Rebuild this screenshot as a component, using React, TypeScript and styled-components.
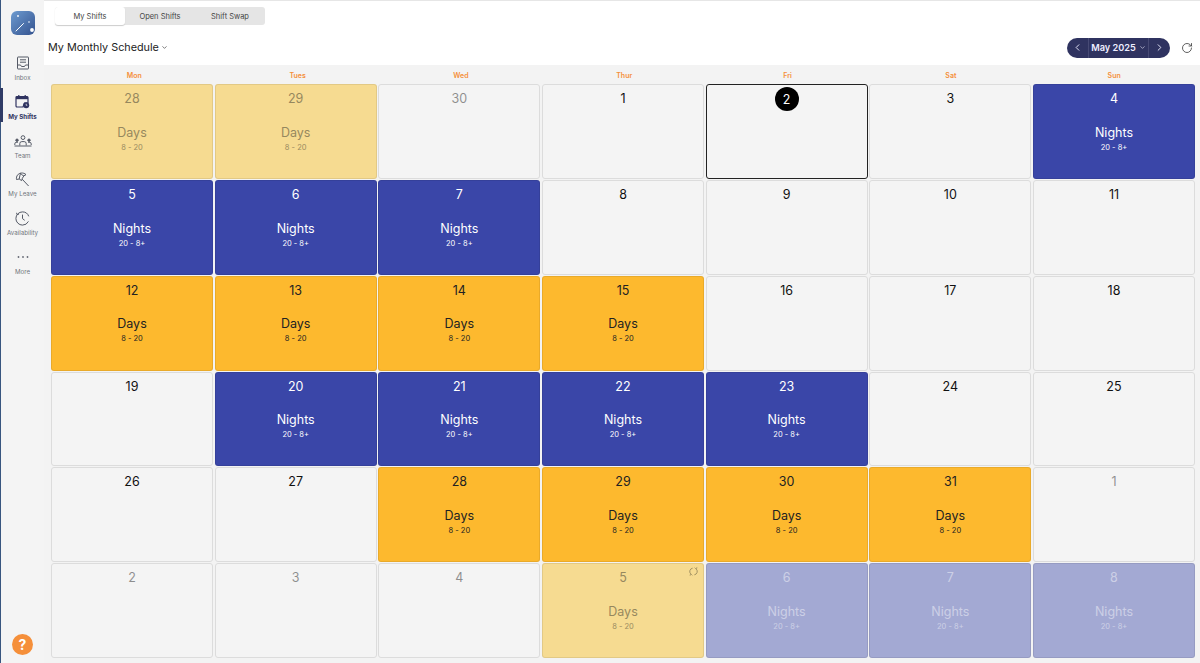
import styled, { createGlobalStyle } from "styled-components";
import { ChevronDown, ChevronLeft, ChevronRight, RotateCw } from "lucide-react";
import { ReactNode } from "react";

type Kind = "empty" | "days" | "nights";

interface Day {
    date: number;
    kind?: Kind;
    faded?: boolean;
    today?: boolean;
    swap?: boolean;
}

const weekdays = ["Mon", "Tues", "Wed", "Thur", "Fri", "Sat", "Sun"];

const days: Day[] = [
    { date: 28, kind: "days", faded: true },
    { date: 29, kind: "days", faded: true },
    { date: 30, faded: true },
    { date: 1 },
    { date: 2, today: true },
    { date: 3 },
    { date: 4, kind: "nights" },
    { date: 5, kind: "nights" },
    { date: 6, kind: "nights" },
    { date: 7, kind: "nights" },
    { date: 8 },
    { date: 9 },
    { date: 10 },
    { date: 11 },
    { date: 12, kind: "days" },
    { date: 13, kind: "days" },
    { date: 14, kind: "days" },
    { date: 15, kind: "days" },
    { date: 16 },
    { date: 17 },
    { date: 18 },
    { date: 19 },
    { date: 20, kind: "nights" },
    { date: 21, kind: "nights" },
    { date: 22, kind: "nights" },
    { date: 23, kind: "nights" },
    { date: 24 },
    { date: 25 },
    { date: 26 },
    { date: 27 },
    { date: 28, kind: "days" },
    { date: 29, kind: "days" },
    { date: 30, kind: "days" },
    { date: 31, kind: "days" },
    { date: 1, faded: true },
    { date: 2, faded: true },
    { date: 3, faded: true },
    { date: 4, faded: true },
    { date: 5, kind: "days", faded: true, swap: true },
    { date: 6, kind: "nights", faded: true },
    { date: 7, kind: "nights", faded: true },
    { date: 8, kind: "nights", faded: true },
];

const shiftInfo = {
    days: { name: "Days", hours: "8 - 20" },
    nights: { name: "Nights", hours: "20 - 8+" },
};

const InboxIcon = () => (
    <svg width="14" height="14" viewBox="0 0 14 14" fill="none" stroke="#555a66" strokeWidth="1">
        <rect x="1.5" y="1" width="11" height="12" rx="0.5" />
        <path d="M1.5 9h3l1 1.5h3l1-1.5h3M4 3.8h6M4 6.2h6" />
    </svg>
);

const CalendarIcon = () => (
    <svg width="15" height="15" viewBox="0 0 15 15">
        <path d="M1 3.5a1 1 0 0 1 1-1h10a1 1 0 0 1 1 1V9H9.5L8 13H2a1 1 0 0 1-1-1z" fill="none" stroke="#2f3360" strokeWidth="1.2" />
        <path d="M1 2.6h12v2.6H1z" fill="#2f3360" />
        <path d="M3.8 1v2.4M10.2 1v2.4" stroke="#2f3360" strokeWidth="1.2" />
        <circle cx="11.2" cy="11.2" r="3" fill="#2f3360" />
        <path d="M11.2 9.8v1.5h1.1" stroke="#fff" strokeWidth="0.7" fill="none" />
    </svg>
);

const TeamIcon = () => (
    <svg width="18" height="12" viewBox="0 0 18 12" fill="none" stroke="#555a66" strokeWidth="1">
        <circle cx="9" cy="2.6" r="1.9" />
        <path d="M5.8 10.5V8.6a2 2 0 0 1 2-2h2.4a2 2 0 0 1 2 2v1.9" />
        <circle cx="3" cy="5.2" r="1.2" fill="#555a66" />
        <circle cx="15" cy="5.2" r="1.2" fill="#555a66" />
        <path d="M0.8 10V8.8a1.4 1.4 0 0 1 1.4-1.4h1.6M17.2 10V8.8a1.4 1.4 0 0 0-1.4-1.4h-1.6M0.5 11h17" />
    </svg>
);

const LeaveIcon = () => (
    <svg width="15" height="15" viewBox="0 0 15 15" fill="none" stroke="#555a66" strokeWidth="1">
        <path d="M1.5 7.5C.9 4.2 3.2 1.2 6.4 1c1.7-.1 3.3.4 4.6 1.6L8.9 3.9 7.4 6.2 6.6 8.6 4.2 7 1.5 7.5z" />
        <path d="M5.6 1.2C5 3 4.5 5 4.2 7M8.9 3.9C7.4 3.4 6.2 2.4 5.6 1.2M7.2 7.2 13.6 14" />
    </svg>
);

const AvailabilityIcon = () => (
    <svg width="15" height="15" viewBox="0 0 15 15" fill="none" stroke="#555a66" strokeWidth="1">
        <circle cx="7.5" cy="7.5" r="6.6" strokeDasharray="36 5" strokeDashoffset="-3" />
        <path d="M1.6 1.8l.4 1.8 1.8-.3" />
        <path d="M7.5 3.6v4l2.2 1.7" />
    </svg>
);

const MoreIcon = () => (
    <svg width="14" height="14" viewBox="0 0 14 14" fill="#666a75">
        <circle cx="2.5" cy="7" r="0.9" />
        <circle cx="7" cy="7" r="0.9" />
        <circle cx="11.5" cy="7" r="0.9" />
    </svg>
);

const LogoIcon = () => (
    <svg width="24" height="24" viewBox="0 0 24 24">
        <defs>
            <linearGradient id="logoFill" x1="0" y1="0" x2="1" y2="1">
                <stop offset="0" stopColor="#6d9bd0" />
                <stop offset="1" stopColor="#34538f" />
            </linearGradient>
        </defs>
        <rect width="24" height="24" rx="6" fill="url(#logoFill)" />
        <path d="M5 20 12.5 12.5" stroke="#fff" strokeWidth="1" strokeLinecap="round" />
        <circle cx="7" cy="5" r="0.9" fill="#fff" />
        <circle cx="18" cy="11" r="0.8" fill="#fff" />
        <circle cx="21" cy="19" r="1.9" fill="#fff" />
    </svg>
);

const SwapIcon = () => (
    <svg width="9" height="9" viewBox="0 0 9 9" fill="none" stroke="#3f3a2a" strokeWidth="1">
        <path d="M3.6 1.2A3.4 3.4 0 0 0 1.6 6.8M5.4 7.8A3.4 3.4 0 0 0 7.4 2.2" />
        <path d="M5.6.6 7.4 2.4l.5-2.2M3.4 8.4 1.6 6.6l-.5 2.2" strokeWidth="0.8" />
    </svg>
);

const navItems: { label: string; icon: ReactNode; active?: boolean }[] = [
    { label: "Inbox", icon: <InboxIcon /> },
    { label: "My Shifts", icon: <CalendarIcon />, active: true },
    { label: "Team", icon: <TeamIcon /> },
    { label: "My Leave", icon: <LeaveIcon /> },
    { label: "Availability", icon: <AvailabilityIcon /> },
    { label: "More", icon: <MoreIcon /> },
];

export default function App() {
    return (
        <>
            <GlobalStyle />
            <Page>
                <Sidebar>
                    <Logo><LogoIcon /></Logo>
                    <Nav>
                        {navItems.map((item) => (
                            <NavItem key={item.label} $active={item.active}>
                                <NavIcon>{item.icon}</NavIcon>
                                <NavLabel $active={item.active}>{item.label}</NavLabel>
                            </NavItem>
                        ))}
                    </Nav>
                    <HelpButton>?</HelpButton>
                </Sidebar>
                <Main>
                    <Header>
                        <Tabs>
                            <Tab $active>My Shifts</Tab>
                            <Tab>Open Shifts</Tab>
                            <Tab>Shift Swap</Tab>
                        </Tabs>
                        <TitleRow>
                            <Title>
                                My Monthly Schedule
                                <ChevronDown size={7} strokeWidth={2} />
                            </Title>
                            <Controls>
                                <MonthPicker>
                                    <MonthArrow><ChevronLeft size={11} strokeWidth={2} /></MonthArrow>
                                    <MonthLabel>
                                        May 2025
                                        <ChevronDown size={7} strokeWidth={2} />
                                    </MonthLabel>
                                    <MonthArrow><ChevronRight size={11} strokeWidth={2} /></MonthArrow>
                                </MonthPicker>
                                <RotateCw size={12} strokeWidth={1.7} color="#444" />
                            </Controls>
                        </TitleRow>
                    </Header>
                    <Calendar>
                        <Weekdays>
                            {weekdays.map((day) => <Weekday key={day}>{day}</Weekday>)}
                        </Weekdays>
                        <DayGrid>
                            {days.map((day, i) => (
                                <DayCell key={i} $kind={day.kind ?? "empty"} $faded={day.faded} $today={day.today}>
                                    <DateNumber $today={day.today}>{day.date}</DateNumber>
                                    {day.kind && day.kind !== "empty" && (
                                        <>
                                            <ShiftName>{shiftInfo[day.kind].name}</ShiftName>
                                            <ShiftHours>{shiftInfo[day.kind].hours}</ShiftHours>
                                        </>
                                    )}
                                    {day.swap && <SwapMark><SwapIcon /></SwapMark>}
                                </DayCell>
                            ))}
                        </DayGrid>
                    </Calendar>
                </Main>
            </Page>
        </>
    );
}

const GlobalStyle = createGlobalStyle`
    html, body {
        margin: 0;
        height: 100%;
        overflow: hidden;
        background: #f3f3f3;
    }
    * {
        box-sizing: border-box;
    }
    body {
        font-family: Inter, "Noto Sans", sans-serif;
        color: #222;
    }
`;

const Page = styled.div`
    display: flex;
    width: 1200px;
    height: 663px;
`;

const Sidebar = styled.aside`
    display: flex;
    flex-direction: column;
    align-items: center;
    width: 44px;
    flex-shrink: 0;
    padding: 11px 0 8px;
    background: #f4f4f4;
    border-left: 1px solid #38557f;
`;

const Logo = styled.div`
    display: flex;
    height: 24px;
    margin-bottom: 20px;
`;

const Nav = styled.nav`
    display: flex;
    flex-direction: column;
    width: 100%;
    flex: 1;
`;

const NavItem = styled.a<{ $active?: boolean }>`
    position: relative;
    display: flex;
    flex-direction: column;
    align-items: center;
    justify-content: flex-start;
    height: 38.8px;
    gap: 2px;

    &::before {
        content: "";
        display: ${(p) => (p.$active ? "block" : "none")};
        position: absolute;
        left: -1px;
        top: -6px;
        width: 3px;
        height: 34px;
        background: #2f3b66;
    }
`;

const NavIcon = styled.span`
    display: flex;
    align-items: center;
    justify-content: center;
    height: 16px;
`;

const NavLabel = styled.span<{ $active?: boolean }>`
    font-size: 6.2px;
    line-height: 9px;
    font-weight: ${(p) => (p.$active ? 700 : 400)};
    color: ${(p) => (p.$active ? "#2f3360" : "#71747d")};
    white-space: nowrap;
`;

const HelpButton = styled.div`
    display: flex;
    align-items: center;
    justify-content: center;
    width: 21px;
    height: 21px;
    border-radius: 50%;
    background: #f58f3a;
    color: #fff;
    font-size: 14px;
    font-weight: 700;
`;

const Main = styled.main`
    display: flex;
    flex-direction: column;
    flex: 1;
    min-width: 0;
`;

const Header = styled.header`
    display: flex;
    flex-direction: column;
    height: 65px;
    padding: 7px 16px 0 4px;
    background: #fff;
    border-top: 1px solid #e6e6e6;
`;

const Tabs = styled.div`
    display: flex;
    align-self: flex-start;
    width: 210px;
    height: 18px;
    margin-left: 7px;
    margin-top: -1px;
    background: #e5e5e5;
    border-radius: 3px;
`;

const Tab = styled.div<{ $active?: boolean }>`
    display: flex;
    align-items: center;
    justify-content: center;
    width: 70px;
    font-size: 7.5px;
    color: #444;
    background: ${(p) => (p.$active ? "#fff" : "transparent")};
    border-radius: 3px;
    box-shadow: ${(p) => (p.$active ? "0 1px 1px #ccc" : "none")};
`;

const TitleRow = styled.div`
    display: flex;
    align-items: center;
    justify-content: space-between;
    margin-top: 12px;
    height: 21px;
`;

const Title = styled.h1`
    display: flex;
    align-items: center;
    gap: 2px;
    margin: 0;
    font-size: 10.8px;
    font-weight: 400;
    color: #222;
`;

const Controls = styled.div`
    display: flex;
    align-items: center;
    gap: 11px;
    margin-right: -9px;
`;

const MonthPicker = styled.div`
    display: flex;
    align-items: stretch;
    width: 103px;
    height: 20px;
    background: #2f3360;
    color: #eef;
    border-radius: 10px;
`;

const MonthArrow = styled.div`
    display: flex;
    align-items: center;
    justify-content: center;
    width: 21px;
`;

const MonthLabel = styled.div`
    display: flex;
    align-items: center;
    justify-content: center;
    gap: 3px;
    flex: 1;
    font-size: 9.2px;
    font-weight: 600;
    border-left: 1px solid #474a75;
    border-right: 1px solid #474a75;
`;

const Calendar = styled.section`
    display: flex;
    flex-direction: column;
    flex: 1;
    padding: 0 5px 5px 7px;
`;

const Weekdays = styled.div`
    display: grid;
    grid-template-columns: repeat(7, 1fr);
    column-gap: 1.67px;
    height: 19px;
    padding: 2px 0 0 2.5px;
    align-items: center;
`;

const Weekday = styled.div`
    text-align: center;
    font-size: 7px;
    font-weight: 600;
    color: #f58f3a;
`;

const DayGrid = styled.div`
    display: grid;
    grid-template-columns: repeat(7, 1fr);
    grid-template-rows: repeat(6, 1fr);
    gap: 1px 1.67px;
    flex: 1;
`;

const cellBackground = { empty: "#f4f4f4", days: "#fdb92e", nights: "#3a46a8" };
const cellText = { empty: "#111", days: "#222", nights: "#fff" };

const DayCell = styled.div<{ $kind: Kind; $faded?: boolean; $today?: boolean }>`
    position: relative;
    display: flex;
    flex-direction: column;
    align-items: center;
    padding-top: 6px;
    border-radius: 3px;
    background: ${(p) => cellBackground[p.$kind]};
    color: ${(p) => cellText[p.$kind]};
    border: ${(p) => (p.$today ? "1.5px solid #222" : "1px solid #dcdcdc")};
    border-color: ${(p) => (p.$today ? "#222" : p.$kind === "empty" ? "#dcdcdc" : "rgba(0, 0, 0, 0.08)")};

    & > * {
        opacity: ${(p) => (p.$faded ? 0.45 : 1)};
    }

    ${(p) => p.$faded && p.$kind !== "empty" && `background: ${p.$kind === "days" ? "#f6db91" : "#a3a9d3"};`}
`;

const DateNumber = styled.div<{ $today?: boolean }>`
    display: flex;
    align-items: center;
    justify-content: center;
    font-size: 12.5px;
    width: ${(p) => (p.$today ? "24px" : "auto")};
    height: ${(p) => (p.$today ? "24px" : "15px")};
    margin-top: ${(p) => (p.$today ? "-4px" : "0")};
    margin-bottom: ${(p) => (p.$today ? "-5px" : "0")};
    border-radius: 50%;
    background: ${(p) => (p.$today ? "#000" : "transparent")};
    color: ${(p) => (p.$today ? "#fff" : "inherit")};
`;

const ShiftName = styled.div`
    margin-top: 18.7px;
    font-size: 12.5px;
    line-height: 15px;
`;

const ShiftHours = styled.div`
    margin-top: 2px;
    font-size: 7.5px;
    line-height: 12px;
`;

const SwapMark = styled.span`
    position: absolute;
    top: 3px;
    right: 5px;
    display: flex;
`;
